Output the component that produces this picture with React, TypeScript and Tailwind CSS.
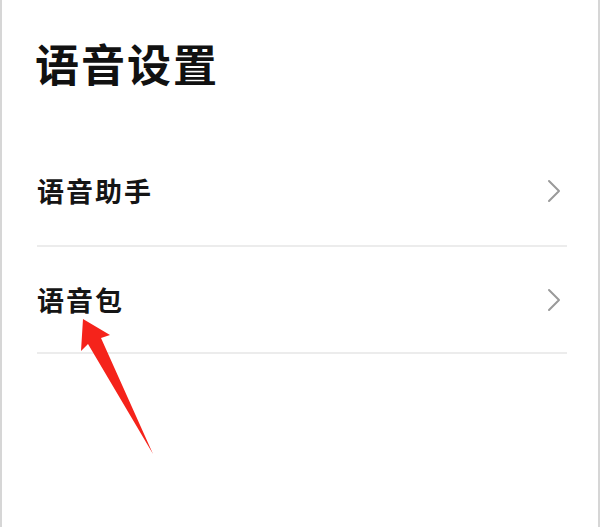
import React from "react";

const rows = ["语音助手", "语音包"];

function Chevron() {
    return (
        <svg width="14" height="24" viewBox="0 0 14 24" className="mr-[6px]">
            <path d="M2 2 L12 12 L2 22" fill="none" stroke="#9a9a9a" strokeWidth="2" strokeLinecap="round" strokeLinejoin="round" />
        </svg>
    );
}

export default function App() {
    return (
        <div
            className="relative w-[600px] h-[527px] bg-white border-l-2 border-r-2 border-[#d6d6d6] overflow-hidden"
            style={{ fontFamily: '"Noto Sans CJK SC", "Noto Sans", sans-serif' }}
        >
            {/* page title */}
            <div className="h-[140px] pl-[33px] pt-[41px]">
                <h1 className="text-[44px] leading-none font-bold text-[#111] tracking-[2px]">语音设置</h1>
            </div>

            {/* settings list */}
            <div className="pl-[35px] pr-[31px]">
                {rows.map((label, i) => (
                    <div
                        key={label}
                        className={
                            i === 0
                                ? "h-[107px] pb-[4px] flex items-center justify-between border-b-2 border-[#ececec]"
                                : "h-[107px] flex items-center justify-between border-b-2 border-[#ececec]"
                        }
                    >
                        <span className="text-[27px] leading-none font-semibold text-[#151515] tracking-[2px]">{label}</span>
                        <Chevron />
                    </div>
                ))}
            </div>

            {/* red annotation arrow */}
            <svg className="absolute left-0 top-0 pointer-events-none" width="600" height="527">
                <polygon
                    points="81,319 108,335 99,338 151,454 86,344 79,351"
                    fill="#f5231b"
                />
            </svg>
        </div>
    );
}
